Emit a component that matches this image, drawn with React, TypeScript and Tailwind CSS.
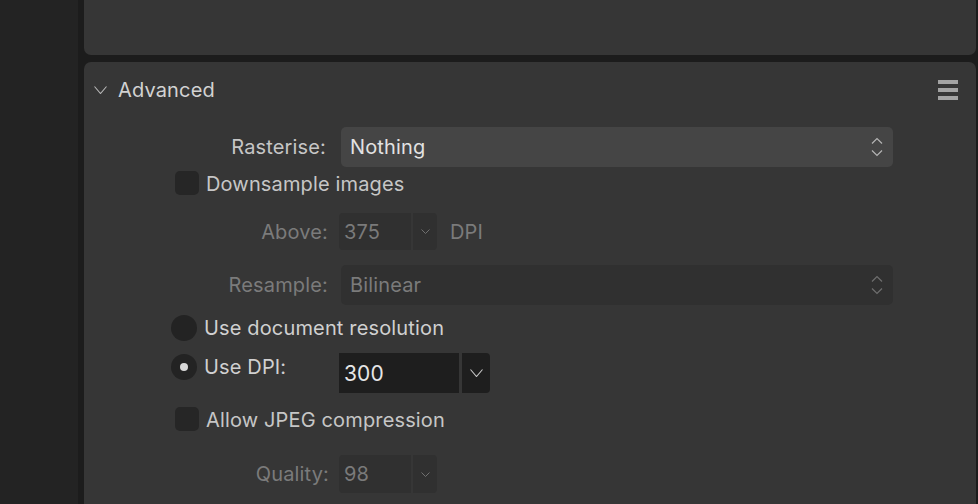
import React from "react";

const font = { fontFamily: "Inter, 'Noto Sans', sans-serif" };

function UpDown({ color }: { color: string }) {
  return (
    <svg width="12" height="22" viewBox="0 0 12 22" fill="none" stroke={color} strokeWidth="1.2">
      <path d="M1 7.5 L6 2.5 L11 7.5" />
      <path d="M1 14.5 L6 19.5 L11 14.5" />
    </svg>
  );
}

function Chevron({ w, h, color, sw = 1.2 }: { w: number; h: number; color: string; sw?: number }) {
  return (
    <svg width={w} height={h} viewBox={`0 0 ${w} ${h}`} fill="none" stroke={color} strokeWidth={sw}>
      <path d={`M0.5 0.5 L${w / 2} ${h - 0.5} L${w - 0.5} 0.5`} />
    </svg>
  );
}

function SmallCombo({ value }: { value: string }) {
  return (
    <div className="flex h-full gap-[2px]">
      <div className="w-[72px] h-full rounded-l-[4px] bg-[#303030] flex items-center pl-[5px] text-[20px] text-[#7a7a7a]">
        {value}
      </div>
      <div className="w-[24px] h-full rounded-r-[4px] bg-[#303030] flex items-center justify-center">
        <Chevron w={9} h={5} color="#707070" sw={1} />
      </div>
    </div>
  );
}

export default function App() {
  return (
    <div style={font} className="w-[978px] h-[504px] flex bg-[#1c1c1c] overflow-hidden tracking-[0.15px]">
      <div className="w-[78px] h-full bg-[#232323]" />
      <div className="flex-1 flex flex-col gap-[7px] pl-[6px] pr-[2px]">
        <div className="h-[55px] rounded-b-[7px] bg-[#363636]" />
        <div className="flex-1 rounded-t-[7px] bg-[#363636] flex flex-col">
          {/* header */}
          <div className="h-[56px] flex items-center pl-[10px] pr-[18px]">
            <Chevron w={13} h={8} color="#b8b8b8" sw={1.1} />
            <span className="ml-[11px] text-[20px] text-[#d2d2d2]">Advanced</span>
            <div className="ml-auto flex flex-col gap-[4px]">
              <div className="w-[20px] h-[4px] bg-[#a3a3a3]" />
              <div className="w-[20px] h-[4px] bg-[#a3a3a3]" />
              <div className="w-[20px] h-[4px] bg-[#a3a3a3]" />
            </div>
          </div>

          {/* Rasterise */}
          <div className="mt-[9px] h-[40px] flex items-center">
            <span className="w-[242px] text-right text-[20px] text-[#c6c6c6]">Rasterise:</span>
            <div className="ml-[15px] w-[552px] h-full rounded-[5px] bg-[#454545] flex items-center pl-[9px] pr-[10px]">
              <span className="text-[20px] text-[#e2e2e2]">Nothing</span>
              <div className="ml-auto">
                <UpDown color="#b4b4b4" />
              </div>
            </div>
          </div>

          {/* Downsample */}
          <div className="mt-[4px] h-[24px] flex items-center pl-[91px]">
            <div className="w-[24px] h-[24px] rounded-[5px] bg-[#262626]" />
            <span className="ml-[7px] text-[20px] text-[#c6c6c6] translate-y-[1px]">Downsample images</span>
          </div>

          {/* Above */}
          <div className="mt-[18px] h-[37px] flex items-center">
            <span className="w-[244px] text-right text-[20px] text-[#7b7b7b]">Above:</span>
            <div className="ml-[11px] h-full">
              <SmallCombo value="375" />
            </div>
            <span className="ml-[13px] text-[20px] text-[#7b7b7b]">DPI</span>
          </div>

          {/* Resample */}
          <div className="mt-[15px] h-[40px] flex items-center">
            <span className="w-[244px] text-right text-[20px] text-[#7b7b7b]">Resample:</span>
            <div className="ml-[13px] w-[552px] h-full rounded-[5px] bg-[#303030] flex items-center pl-[9px] pr-[10px]">
              <span className="text-[20px] text-[#7b7b7b]">Bilinear</span>
              <div className="ml-auto">
                <UpDown color="#6e6e6e" />
              </div>
            </div>
          </div>

          {/* Use document resolution */}
          <div className="mt-[10px] h-[26px] flex items-center pl-[87px]">
            <div className="w-[26px] h-[26px] rounded-full bg-[#232323]" />
            <span className="ml-[7px] text-[20px] text-[#d0d0d0]">Use document resolution</span>
          </div>

          {/* Use DPI */}
          <div className="mt-[12px] h-[40px] flex items-start">
            <div className="w-[255px] flex items-center pl-[87px] h-[28px]">
              <div className="w-[26px] h-[26px] rounded-full bg-[#232323] flex items-center justify-center">
                <div className="w-[8px] h-[8px] rounded-full bg-[#d8d8d8]" />
              </div>
              <span className="ml-[7px] text-[20px] text-[#d0d0d0]">Use DPI:</span>
            </div>
            <div className="flex h-full gap-[3px]">
              <div className="w-[120px] h-full bg-[#1e1e1e] flex items-center pl-[5px] text-[21px] text-[#e6e6e6]">
                <span className="translate-y-[1px]">300</span>
              </div>
              <div className="w-[28px] h-full rounded-r-[4px] bg-[#1e1e1e] flex items-center justify-center">
                <Chevron w={13} h={8} color="#c8c8c8" sw={1.1} />
              </div>
            </div>
          </div>

          {/* Allow JPEG */}
          <div className="mt-[14px] h-[24px] flex items-center pl-[91px]">
            <div className="w-[24px] h-[24px] rounded-[5px] bg-[#262626]" />
            <span className="ml-[7px] text-[20px] text-[#c6c6c6] translate-y-[1px]">Allow JPEG compression</span>
          </div>

          {/* Quality */}
          <div className="mt-[24px] h-[38px] flex items-center">
            <span className="w-[245px] text-right text-[20px] text-[#7b7b7b]">Quality:</span>
            <div className="ml-[10px] h-full">
              <SmallCombo value="98" />
            </div>
          </div>
        </div>
      </div>
    </div>
  );
}
